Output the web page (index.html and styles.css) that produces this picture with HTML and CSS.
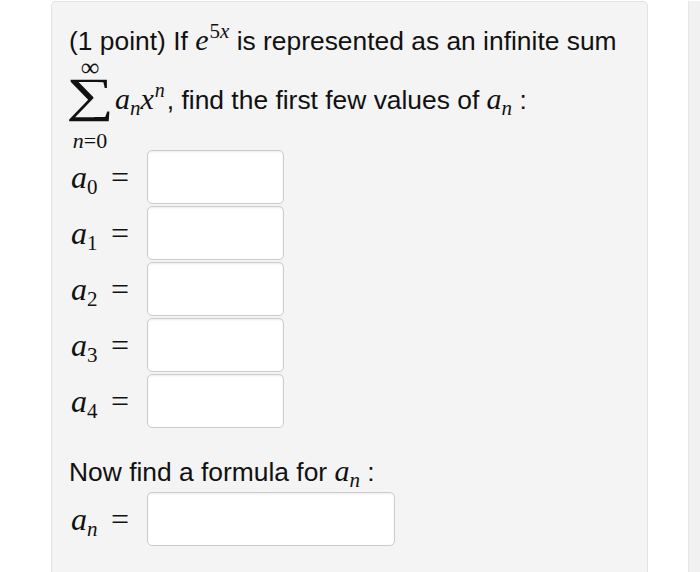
FILE: index.html
```html
<!DOCTYPE html>
<html>
<head>
<meta charset="utf-8">
<link rel="stylesheet" href="styles.css">
</head>
<body>
<div class="page">
  <div class="panel">
    <p class="line1">(1 point) If <span class="m">e<sup class="sup"><span class="up">5</span>x</sup></span> is represented as an infinite sum</p>
    <div class="line2">
      <span class="sum"><span class="lim-top">∞</span><span class="sigma">∑</span><span class="lim-bot"><i>n</i>=0</span></span>
      <span class="expr"><span class="m">a<sub class="sub">n</sub>x<sup class="supn">n</sup></span><span class="txt">, find the first few values of <span class="m">a<sub class="sub">n</sub></span> :</span></span>
    </div>
    <div class="rows">
      <div class="row"><span class="lab m">a<sub class="sub up">0</sub></span><span class="eq">=</span><input class="box" type="text"></div>
      <div class="row"><span class="lab m">a<sub class="sub up">1</sub></span><span class="eq">=</span><input class="box" type="text"></div>
      <div class="row"><span class="lab m">a<sub class="sub up">2</sub></span><span class="eq">=</span><input class="box" type="text"></div>
      <div class="row"><span class="lab m">a<sub class="sub up">3</sub></span><span class="eq">=</span><input class="box" type="text"></div>
      <div class="row"><span class="lab m">a<sub class="sub up">4</sub></span><span class="eq">=</span><input class="box" type="text"></div>
    </div>
    <p class="line3">Now find a formula for <span class="m">a<sub class="sub">n</sub></span> :</p>
    <div class="row"><span class="lab m">a<sub class="sub">n</sub></span><span class="eq">=</span><input class="box wide" type="text"></div>
  </div>
  <div class="strip"></div>
</div>
</body>
</html>
```

FILE: styles.css
```css
html, body {
  margin: 0;
  padding: 0;
  background: #ffffff;
  height: 100%;
  overflow: hidden;
}
body {
  font-family: "Liberation Sans", Arial, sans-serif;
  color: #111111;
}
.page {
  display: flex;
  height: 572px;
  padding-top: 1px;
  box-sizing: border-box;
}
.panel {
  margin-left: 51px;
  width: 598px;
  box-sizing: border-box;
  background: #f4f4f4;
  border: 1px solid #e2e2e2;
  border-bottom: none;
  border-radius: 5px 5px 0 0;
  padding: 20px 0 0 17px;
}
.strip {
  margin-left: 40px;
  width: 11px;
  background: #f1f1f1;
  border-left: 1px solid #e6e6e6;
}
.line1 {
  margin: 0;
  font-size: 26.4px;
  line-height: 36px;
  white-space: nowrap;
}
.m {
  font-family: "Liberation Serif", "Times New Roman", serif;
  font-style: italic;
  font-size: 30px;
}
.up {
  font-style: normal;
}
.m .sup {
  font-size: 21px;
  vertical-align: 12px;
  line-height: 0;
  margin-left: 1px;
}
.sub {
  font-size: 21px;
  vertical-align: -6px;
  line-height: 0;
}
.supn {
  font-size: 20px;
  vertical-align: 12px;
  line-height: 0;
  margin-left: 1px;
}
.line2 {
  display: flex;
  align-items: flex-start;
  height: 94px;
}
.sum {
  display: grid;
  grid-template-rows: 14px 48px 32px;
  justify-items: center;
  align-items: center;
  font-family: "Liberation Serif", "Times New Roman", serif;
  width: 42px;
  margin-right: 4px;
}
.lim-top {
  font-size: 26px;
  line-height: 14px;
  transform: translateY(2px);
}
.sigma {
  font-size: 48px;
  line-height: 48px;
  transform: translateY(-2px) scaleX(1.4);
}
.lim-bot {
  font-size: 22px;
  line-height: 32px;
  white-space: nowrap;
  transform: translateY(4px);
}
.expr {
  margin-top: 20px;
  line-height: 40px;
  white-space: nowrap;
}
.txt {
  font-size: 26.4px;
  margin-left: 2px;
}
.rows {
  display: flex;
  flex-direction: column;
  gap: 2px;
  margin-top: -3px;
}
.row {
  display: flex;
  align-items: center;
}
.lab {
  width: 40px;
  font-size: 32px;
  padding-left: 2px;
}
.lab .sub {
  font-size: 21px;
  vertical-align: -6px;
}
.eq {
  font-family: "Liberation Serif", "Times New Roman", serif;
  font-size: 32px;
  width: 36px;
  text-align: left;
}
.box {
  width: 137px;
  height: 54px;
  box-sizing: border-box;
  border: 1px solid #cccccc;
  border-radius: 5px;
  background: #ffffff;
  box-shadow: inset 0 1px 2px rgba(0,0,0,0.08);
  margin: 0;
  padding: 0;
}
.box.wide {
  width: 248px;
}
.line3 {
  margin: 28px 0 5px;
  font-size: 26.4px;
  line-height: 30px;
}
```
